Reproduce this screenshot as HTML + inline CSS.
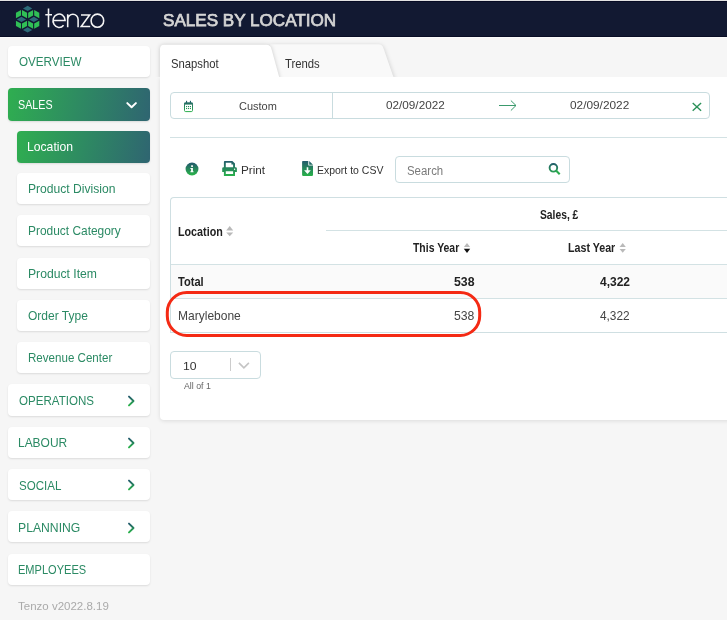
<!DOCTYPE html>
<html><head><meta charset="utf-8"><title>Sales by Location</title>
<style>
html,body{margin:0;padding:0}
body{width:727px;height:620px;overflow:hidden;background:#f6f6f6;font-family:"Liberation Sans",sans-serif;position:relative}
.a{position:absolute}
.t{position:absolute;white-space:nowrap;transform-origin:0 0;display:block}
.hdr{left:0;top:1px;width:727px;height:34px;background:#121932;border-top:1px solid #070b24;border-bottom:1px solid #090d25}
.topline{left:0;top:0;width:727px;height:1px;background:#e2e2e2}
.hl{left:0;top:37px;width:727px;height:1px;background:#fbfbfb}
.nav{left:8px;width:142px;background:#fff;border-radius:4px;box-shadow:0 1px 2px rgba(0,0,0,.11)}
.sub{left:17px;width:133px}
.grad{background:linear-gradient(100deg,#2fae50 0%,#2e8a62 50%,#2f6571 100%)}
.panel{left:160px;top:77px;width:580px;height:343px;background:#fff;border-radius:0 0 0 4px;box-shadow:0 1px 4px rgba(0,0,0,.11);clip-path:inset(0 0 -6px -6px)}
.box{border:1px solid #c9dcdf;border-radius:4px;background:#fff;box-sizing:border-box}
</style></head><body>
<div class="a topline"></div>
<div class="a hdr"></div>
<div class="a hl"></div>

<!-- logo -->
<svg class="a" style="left:12px;top:2px" width="32" height="34" viewBox="0 0 584 620">
 <g fill="#2c6b79">
  <polygon points="285,70 370,118 285,166 200,118"/>
  <polygon points="172,270 257,318 172,366 87,318"/>
  <polygon points="398,270 483,318 398,366 313,318"/>
  <polygon points="285,462 370,510 285,558 200,510"/>
 </g>
 <g fill="#30c056">
  <polygon points="72,195 165,145 165,245 72,295"/>
  <polygon points="182,145 275,195 275,295 182,245"/>
  <polygon points="295,195 385,145 385,245 295,295"/>
  <polygon points="405,145 498,195 498,295 405,245"/>
  <polygon points="72,340 165,390 165,490 72,440"/>
  <polygon points="182,390 275,340 275,440 182,490"/>
  <polygon points="295,340 385,390 385,490 295,440"/>
  <polygon points="405,390 498,340 498,440 405,490"/>
 </g>
</svg>
<!-- tenzo wordmark -->
<svg class="a" style="left:42px;top:4px" width="66" height="30" viewBox="0 0 66 30" fill="none" stroke="#f4f4f4" stroke-width="1.55" stroke-linecap="butt">
 <path d="M6.5 4.6V23.3M3.3 10.7H10"/>
 <path d="M11.2 16.4H23.1A6.05 6.7 0 1 0 21.6 21.2"/>
 <path d="M25.7 10.2V23.3M25.7 15.6A5.2 5.4 0 0 1 36.1 15.6V23.3"/>
 <path d="M39 10.9H47.6L39.2 22.5H48.2"/>
 <ellipse cx="55.4" cy="16.7" rx="6.3" ry="6.6"/>
</svg>

<!-- sidebar -->
<div class="a nav" style="top:46px;height:31px"></div>
<div class="a nav grad" style="top:88px;height:33px"></div>
<div class="a nav sub grad" style="top:131px;height:32px"></div>
<div class="a nav sub" style="top:173px;height:31px"></div>
<div class="a nav sub" style="top:215.3px;height:31px"></div>
<div class="a nav sub" style="top:257.6px;height:31px"></div>
<div class="a nav sub" style="top:299.9px;height:31px"></div>
<div class="a nav sub" style="top:342.2px;height:31px"></div>
<div class="a nav" style="top:384px;height:32px"></div>
<div class="a nav" style="top:426.6px;height:31.6px"></div>
<div class="a nav" style="top:469.1px;height:31px"></div>
<div class="a nav" style="top:511.4px;height:31px"></div>
<div class="a nav" style="top:553.7px;height:31px"></div>
<!-- chevrons -->
<svg class="a" style="left:124px;top:99px" width="16" height="12" viewBox="0 0 16 12" fill="none" stroke="#fff" stroke-width="2" stroke-linecap="round" stroke-linejoin="round"><path d="M3.3 4.1L7.6 8.2L11.9 4.1"/></svg>
<svg class="a chev" style="left:125px;top:392.6px" width="12" height="16" viewBox="0 0 12 16" fill="none" stroke="url(#gi)" stroke-width="1.9" stroke-linecap="round" stroke-linejoin="round"><path d="M4 3.6L8.5 8L4 12.4"/></svg>
<svg class="a chev" style="left:125px;top:434.9px" width="12" height="16" viewBox="0 0 12 16" fill="none" stroke="url(#gi)" stroke-width="1.9" stroke-linecap="round" stroke-linejoin="round"><path d="M4 3.6L8.5 8L4 12.4"/></svg>
<svg class="a chev" style="left:125px;top:477.2px" width="12" height="16" viewBox="0 0 12 16" fill="none" stroke="url(#gi)" stroke-width="1.9" stroke-linecap="round" stroke-linejoin="round"><path d="M4 3.6L8.5 8L4 12.4"/></svg>
<svg class="a chev" style="left:125px;top:519.5px" width="12" height="16" viewBox="0 0 12 16" fill="none" stroke="url(#gi)" stroke-width="1.9" stroke-linecap="round" stroke-linejoin="round"><path d="M4 3.6L8.5 8L4 12.4"/></svg>

<!-- tabs + panel -->

<div class="a panel"></div>
<svg class="a" style="left:150px;top:36px" width="260" height="41" viewBox="0 0 260 41">
 <defs><filter id="sh" x="-10%" y="-30%" width="120%" height="160%"><feGaussianBlur stdDeviation="2.2"/></filter></defs>
 <path d="M121 9H228.5Q232.5 9 233.8 12.8L245 44H121Z" fill="rgba(0,0,0,.17)" filter="url(#sh)"/>
 <path d="M120 8.3H228.5Q232.3 8.3 233.5 12.3L244.5 44H120Z" fill="#f9f9f9"/>
 <path d="M10 44V13Q10 9 14 9H116.5Q120.3 9 121.4 12.8L130 44Z" fill="rgba(0,0,0,.2)" filter="url(#sh)"/>
 <path d="M10 44V13Q10 8.7 14.3 8.7H116.5Q120.3 8.7 121.4 12.8L130 44Z" fill="#fff"/>
</svg>
<div class="a" style="left:160px;top:76px;width:119px;height:4px;background:#fff"></div>

<!-- date range -->
<div class="a box" style="left:170px;top:92px;width:540px;height:27px"></div>
<div class="a" style="left:332px;top:93px;width:1px;height:25px;background:#c9dcdf"></div>
<div class="a" style="left:170px;top:137px;width:557px;height:1px;background:#d3e2e4"></div>

<!-- table -->
<div class="a" style="left:170px;top:197px;width:570px;height:136px;border:1px solid #cfdfe2;border-radius:4px 0 0 0;box-sizing:border-box;border-right:none"></div>
<div class="a" style="left:326px;top:230px;width:401px;height:1px;background:#d3e2e4"></div>
<div class="a" style="left:171px;top:264px;width:556px;height:1px;background:#d3e2e4"></div>
<div class="a" style="left:171px;top:265px;width:556px;height:33px;background:#fafafa"></div>
<div class="a" style="left:171px;top:298px;width:556px;height:1px;background:#d3e2e4"></div>

<!-- search + select -->
<div class="a box" style="left:395px;top:156px;width:175px;height:27px"></div>
<div class="a box" style="left:170px;top:351px;width:91px;height:28px"></div>
<div class="a" style="left:230px;top:358px;width:1px;height:13px;background:#ccc"></div>

<!--ICONS_START-->
<svg class="a" style="left:0;top:0" width="727" height="620" viewBox="0 0 727 620">
 <defs>
  <linearGradient id="gi" x1="0" y1="0" x2="0" y2="1"><stop offset="0" stop-color="#235a6c"/><stop offset="1" stop-color="#29b24a"/></linearGradient>
  <linearGradient id="gc" gradientUnits="userSpaceOnUse" x1="0" y1="100.5" x2="0" y2="112.2"><stop offset="0" stop-color="#235a6c"/><stop offset="1" stop-color="#29b24a"/></linearGradient>
  <linearGradient id="gp" gradientUnits="userSpaceOnUse" x1="0" y1="161" x2="0" y2="176"><stop offset="0" stop-color="#235a6c"/><stop offset="1" stop-color="#29b24a"/></linearGradient>
  <linearGradient id="gs" gradientUnits="userSpaceOnUse" x1="0" y1="163" x2="0" y2="175"><stop offset="0" stop-color="#235a6c"/><stop offset="1" stop-color="#29b24a"/></linearGradient>
 </defs>
 <!-- calendar -->
 <g>
  <rect x="184.5" y="103" width="8" height="8.6" rx="1.2" fill="none" stroke="url(#gc)" stroke-width="1"/>
  <rect x="184.2" y="102.6" width="8.6" height="2" fill="url(#gc)"/>
  <rect x="186" y="100.7" width="1.1" height="2.4" rx=".4" fill="url(#gc)"/>
  <rect x="189.9" y="100.7" width="1.1" height="2.4" rx=".4" fill="url(#gc)"/>
  <g fill="url(#gc)">
   <rect x="186" y="106" width="1.1" height="1.1"/><rect x="187.95" y="106" width="1.1" height="1.1"/><rect x="189.9" y="106" width="1.1" height="1.1"/>
   <rect x="186" y="107.95" width="1.1" height="1.1"/><rect x="187.95" y="107.95" width="1.1" height="1.1"/><rect x="189.9" y="107.95" width="1.1" height="1.1"/>
  </g>
 </g>
 <!-- arrow -->
 <path d="M499 105.5H516M510.9 100.6L516 105.5L510.9 110.5" fill="none" stroke="#3a9a6c" stroke-width="1"/>
 <!-- close x -->
 <path d="M692.7 103L701.1 110.7M701.1 103L692.7 110.7" fill="none" stroke="#2b9159" stroke-width="1.4"/>
 <!-- info -->
 <circle cx="192" cy="168.95" r="6.45" fill="url(#gs)"/>
 <path d="M191.2 165.2h1.7v1.7h-1.7zM190.4 168h2.5v3.3h.6v1h-3.1v-1h.7v-2.3h-.7z" fill="#fff"/>
 <!-- print -->
 <path fill-rule="evenodd" fill="url(#gp)" d="M223.9 161.9Q223.9 161 224.8 161H232.4L235 163.6V167.2H235.6Q236.9 167.2 236.9 168.5V172H235V175.9H223.9V172H222.2V168.5Q222.2 167.2 223.5 167.2H223.9Z
  M225.8 162.8V167.3H233.1V164.6H231.4V162.8Z
  M225.8 171.2V174.1H233.1V171.2Z
  M233.9 169.3a.7 .7 0 1 0 1.4 0a.7 .7 0 1 0 -1.4 0Z"/>
 <!-- file download -->
 <path fill-rule="evenodd" fill="url(#gp)" d="M302.9 161H308.3V164.9Q308.3 165.6 309 165.6H313V175.1Q313 175.9 312.2 175.9H302.9Q302.1 175.9 302.1 175.1V161.8Q302.1 161 302.9 161Z
  M309.2 161L313 164.7H309.2Z
  M306.7 167.2H308.3V170.3H310.8L307.5 174L304.1 170.3H306.7Z"/>
 <!-- search -->
 <circle cx="553.4" cy="167.8" r="3.8" fill="none" stroke="url(#gs)" stroke-width="1.9"/>
 <path d="M556 170.5L559.7 174.2" stroke="#2aaa4e" stroke-width="2.1" stroke-linecap="butt"/>
 <!-- sort icons -->
 <g fill="#b9b9b9">
  <path d="M229.7 226.1L233.2 230.6H226.2Z"/><path d="M226.2 232.4H233.2L229.7 236.3Z"/>
  <path d="M467 243L470.1 246.9H463.9Z"/>
  <path d="M622.7 243L625.8 246.9H619.6Z"/><path d="M619.6 249.1H625.8L622.7 252.8Z"/>
 </g>
 <path d="M463.8 248.8H470.2L467 253Z" fill="#111"/>
 <!-- select chevron -->
 <path d="M238.9 362.9L243.9 367.8L248.9 362.9" fill="none" stroke="#c4c4c4" stroke-width="1.6"/>
</svg>
<!--ICONS_END-->
<span class="t" style="left:162.55px;top:12.11px;font-size:17.0px;line-height:17.0px;font-weight:400;-webkit-text-stroke:0.75px #d4d4d4;color:#d4d4d4;transform:scaleX(1.0047)">SALES BY LOCATION</span>
<span class="t" style="left:19.03px;top:56.00px;font-size:12.4px;line-height:12.4px;font-weight:400;color:#2b8a64;transform:scaleX(0.9409)">OVERVIEW</span>
<span class="t" style="left:18.27px;top:99.00px;font-size:12.4px;line-height:12.4px;font-weight:400;color:#ffffff;transform:scaleX(0.8641)">SALES</span>
<span class="t" style="left:27.22px;top:141.00px;font-size:12.4px;line-height:12.4px;font-weight:400;color:#ffffff;transform:scaleX(0.9822)">Location</span>
<span class="t" style="left:27.62px;top:183.00px;font-size:12.4px;line-height:12.4px;font-weight:400;color:#2b8a64;transform:scaleX(0.9766)">Product Division</span>
<span class="t" style="left:27.64px;top:225.00px;font-size:12.4px;line-height:12.4px;font-weight:400;color:#2b8a64;transform:scaleX(0.9623)">Product Category</span>
<span class="t" style="left:27.62px;top:268.00px;font-size:12.4px;line-height:12.4px;font-weight:400;color:#2b8a64;transform:scaleX(0.9825)">Product Item</span>
<span class="t" style="left:27.62px;top:310.00px;font-size:12.4px;line-height:12.4px;font-weight:400;color:#2b8a64;transform:scaleX(0.9695)">Order Type</span>
<span class="t" style="left:27.67px;top:352.00px;font-size:12.4px;line-height:12.4px;font-weight:400;color:#2b8a64;transform:scaleX(0.9337)">Revenue Center</span>
<span class="t" style="left:18.53px;top:395.00px;font-size:12.4px;line-height:12.4px;font-weight:400;color:#2b8a64;transform:scaleX(0.9338)">OPERATIONS</span>
<span class="t" style="left:18.04px;top:437.00px;font-size:12.4px;line-height:12.4px;font-weight:400;color:#2b8a64;transform:scaleX(0.9645)">LABOUR</span>
<span class="t" style="left:18.53px;top:480.00px;font-size:12.4px;line-height:12.4px;font-weight:400;color:#2b8a64;transform:scaleX(0.9326)">SOCIAL</span>
<span class="t" style="left:18.32px;top:522.00px;font-size:12.4px;line-height:12.4px;font-weight:400;color:#2b8a64;transform:scaleX(0.9837)">PLANNING</span>
<span class="t" style="left:18.41px;top:564.00px;font-size:12.4px;line-height:12.4px;font-weight:400;color:#2b8a64;transform:scaleX(0.8920)">EMPLOYEES</span>
<span class="t" style="left:18.04px;top:601.02px;font-size:11.2px;line-height:11.2px;font-weight:400;color:#aaaaaa;transform:scaleX(1.0286)">Tenzo v2022.8.19</span>
<span class="t" style="left:171.14px;top:58.00px;font-size:12.4px;line-height:12.4px;font-weight:400;color:#333333;transform:scaleX(0.9101)">Snapshot</span>
<span class="t" style="left:284.77px;top:58.00px;font-size:12.4px;line-height:12.4px;font-weight:400;color:#333333;transform:scaleX(0.9120)">Trends</span>
<span class="t" style="left:239.23px;top:99.68px;font-size:11.6px;line-height:11.6px;font-weight:400;color:#444444;transform:scaleX(0.9471)">Custom</span>
<span class="t" style="left:385.79px;top:98.68px;font-size:11.6px;line-height:11.6px;font-weight:400;color:#444444;transform:scaleX(1.0123)">02/09/2022</span>
<span class="t" style="left:569.99px;top:98.68px;font-size:11.6px;line-height:11.6px;font-weight:400;color:#444444;transform:scaleX(1.0211)">02/09/2022</span>
<span class="t" style="left:240.59px;top:163.68px;font-size:11.6px;line-height:11.6px;font-weight:400;color:#333333;transform:scaleX(1.0110)">Print</span>
<span class="t" style="left:316.60px;top:163.68px;font-size:11.6px;line-height:11.6px;font-weight:400;color:#333333;transform:scaleX(0.9034)">Export to CSV</span>
<span class="t" style="left:407.32px;top:165.34px;font-size:12.0px;line-height:12.0px;font-weight:400;color:#7a7a7a;transform:scaleX(0.9524)">Search</span>
<span class="t" style="left:177.94px;top:226.17px;font-size:12.2px;line-height:12.2px;font-weight:700;color:#222222;transform:scaleX(0.8812)">Location</span>
<span class="t" style="left:539.88px;top:209.17px;font-size:12.2px;line-height:12.2px;font-weight:700;color:#222222;transform:scaleX(0.8447)">Sales, £</span>
<span class="t" style="left:413.10px;top:242.17px;font-size:12.2px;line-height:12.2px;font-weight:700;color:#222222;transform:scaleX(0.8558)">This Year</span>
<span class="t" style="left:567.84px;top:242.17px;font-size:12.2px;line-height:12.2px;font-weight:700;color:#222222;transform:scaleX(0.8755)">Last Year</span>
<span class="t" style="left:178.10px;top:276.17px;font-size:12.2px;line-height:12.2px;font-weight:700;color:#222222;transform:scaleX(0.9101)">Total</span>
<span class="t" style="left:453.79px;top:276.17px;font-size:12.2px;line-height:12.2px;font-weight:700;color:#222222;transform:scaleX(1.0103)">538</span>
<span class="t" style="left:599.85px;top:276.17px;font-size:12.2px;line-height:12.2px;font-weight:700;color:#222222;transform:scaleX(0.9849)">4,322</span>
<span class="t" style="left:177.61px;top:310.17px;font-size:12.2px;line-height:12.2px;font-weight:400;color:#444444;transform:scaleX(0.9863)">Marylebone</span>
<span class="t" style="left:454.00px;top:310.17px;font-size:12.2px;line-height:12.2px;font-weight:400;color:#444444;transform:scaleX(1.0026)">538</span>
<span class="t" style="left:600.06px;top:310.17px;font-size:12.2px;line-height:12.2px;font-weight:400;color:#444444;transform:scaleX(0.9714)">4,322</span>
<span class="t" style="left:183.39px;top:360.93px;font-size:11.3px;line-height:11.3px;font-weight:400;color:#333333;transform:scaleX(1.0783)">10</span>
<span class="t" style="left:183.80px;top:381.37px;font-size:9.6px;line-height:9.6px;font-weight:400;color:#666666;transform:scaleX(0.9138)">All of 1</span>

<!-- red annotation -->
<svg class="a" style="left:0;top:0" width="727" height="620" viewBox="0 0 727 620"><rect x="167.3" y="292.6" width="312.4" height="42.8" rx="19.5" ry="19.5" fill="none" stroke="#f42a14" stroke-width="3"/></svg>
</body></html>
